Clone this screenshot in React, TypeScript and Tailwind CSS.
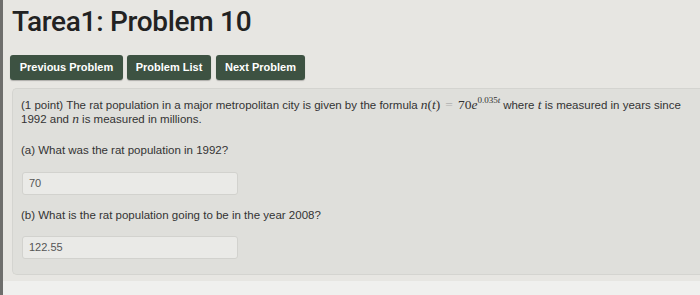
import React from "react";

const sans = { fontFamily: '"Liberation Sans", Arial, sans-serif' };
const serif = { fontFamily: '"Liberation Serif", "Times New Roman", serif' };

function Formula() {
  return (
    <span className="mx-[3px] whitespace-nowrap text-[13.5px] text-[#333]" style={serif}>
      <i>n</i>(<i>t</i>)<span className="mx-[5px] text-[#b0b0b0]">=</span>70<i>e</i>
      <sup className="relative top-[-2px] align-top text-[9px] leading-none">
        0.035<i>t</i>
      </sup>
    </span>
  );
}

export default function App() {
  return (
    <div className="flex h-[295px] w-[700px] overflow-hidden bg-[#e7e6e2]" style={sans}>
      <div className="w-[3px] shrink-0 bg-[#6e6e6c]" />
      <div className="flex min-w-0 flex-1 flex-col">
        <h1
          className="ml-[9px] mt-[8px] text-[28px] font-medium leading-[28px] tracking-[-0.3px] text-[#222]"
          style={{ fontFamily: 'Roboto, "Liberation Sans", sans-serif' }}
        >
          Tarea1: Problem 10
        </h1>
        <div className="ml-[7px] mt-[19px] flex gap-[4px]">
          <button className="h-[25px] w-[113px] rounded-[3px] bg-[#3d5242] text-[11px] font-bold text-white shadow-[0_1px_1px_rgba(0,0,0,0.25)]">
            Previous Problem
          </button>
          <button className="h-[25px] w-[84px] rounded-[3px] bg-[#3d5242] text-[11px] font-bold text-white shadow-[0_1px_1px_rgba(0,0,0,0.25)]">
            Problem List
          </button>
          <button className="ml-[1px] h-[25px] w-[89px] rounded-[3px] bg-[#3d5242] text-[11px] font-bold text-white shadow-[0_1px_1px_rgba(0,0,0,0.25)]">
            Next Problem
          </button>
        </div>
        <div className="ml-[9px] mt-[8px] rounded-l-[5px] border border-r-0 border-[#d4d4d0] bg-[#dfdfdb] pb-[15px] pl-[8px] pt-[9px] text-[11.5px] text-[#333]">
          <p className="leading-[13px]">
            (1 point) The rat population in a major metropolitan city is given by the formula
            <Formula />
            where <i style={serif} className="text-[13.5px]">t</i> is measured in years since
            <br />
            1992 and <i style={serif} className="text-[13.5px]">n</i> is measured in millions.
          </p>
          <p className="mt-[18px] leading-[13px]">(a) What was the rat population in 1992?</p>
          <div className="ml-[1px] mt-[15px] flex h-[23px] w-[216px] items-center rounded-[3px] border border-[#d2d2ce] bg-[#eaeae7] pl-[6px] text-[11px] text-[#555]">
            70
          </div>
          <p className="mt-[14px] leading-[13px]">(b) What is the rat population going to be in the year 2008?</p>
          <div className="ml-[1px] mt-[14px] flex h-[23px] w-[216px] items-center rounded-[3px] border border-[#d2d2ce] bg-[#eaeae7] pl-[6px] text-[11px] text-[#555]">
            122.55
          </div>
        </div>
        <div className="mt-[6px] flex-1 bg-[#f0f0ee]" />
      </div>
    </div>
  );
}
